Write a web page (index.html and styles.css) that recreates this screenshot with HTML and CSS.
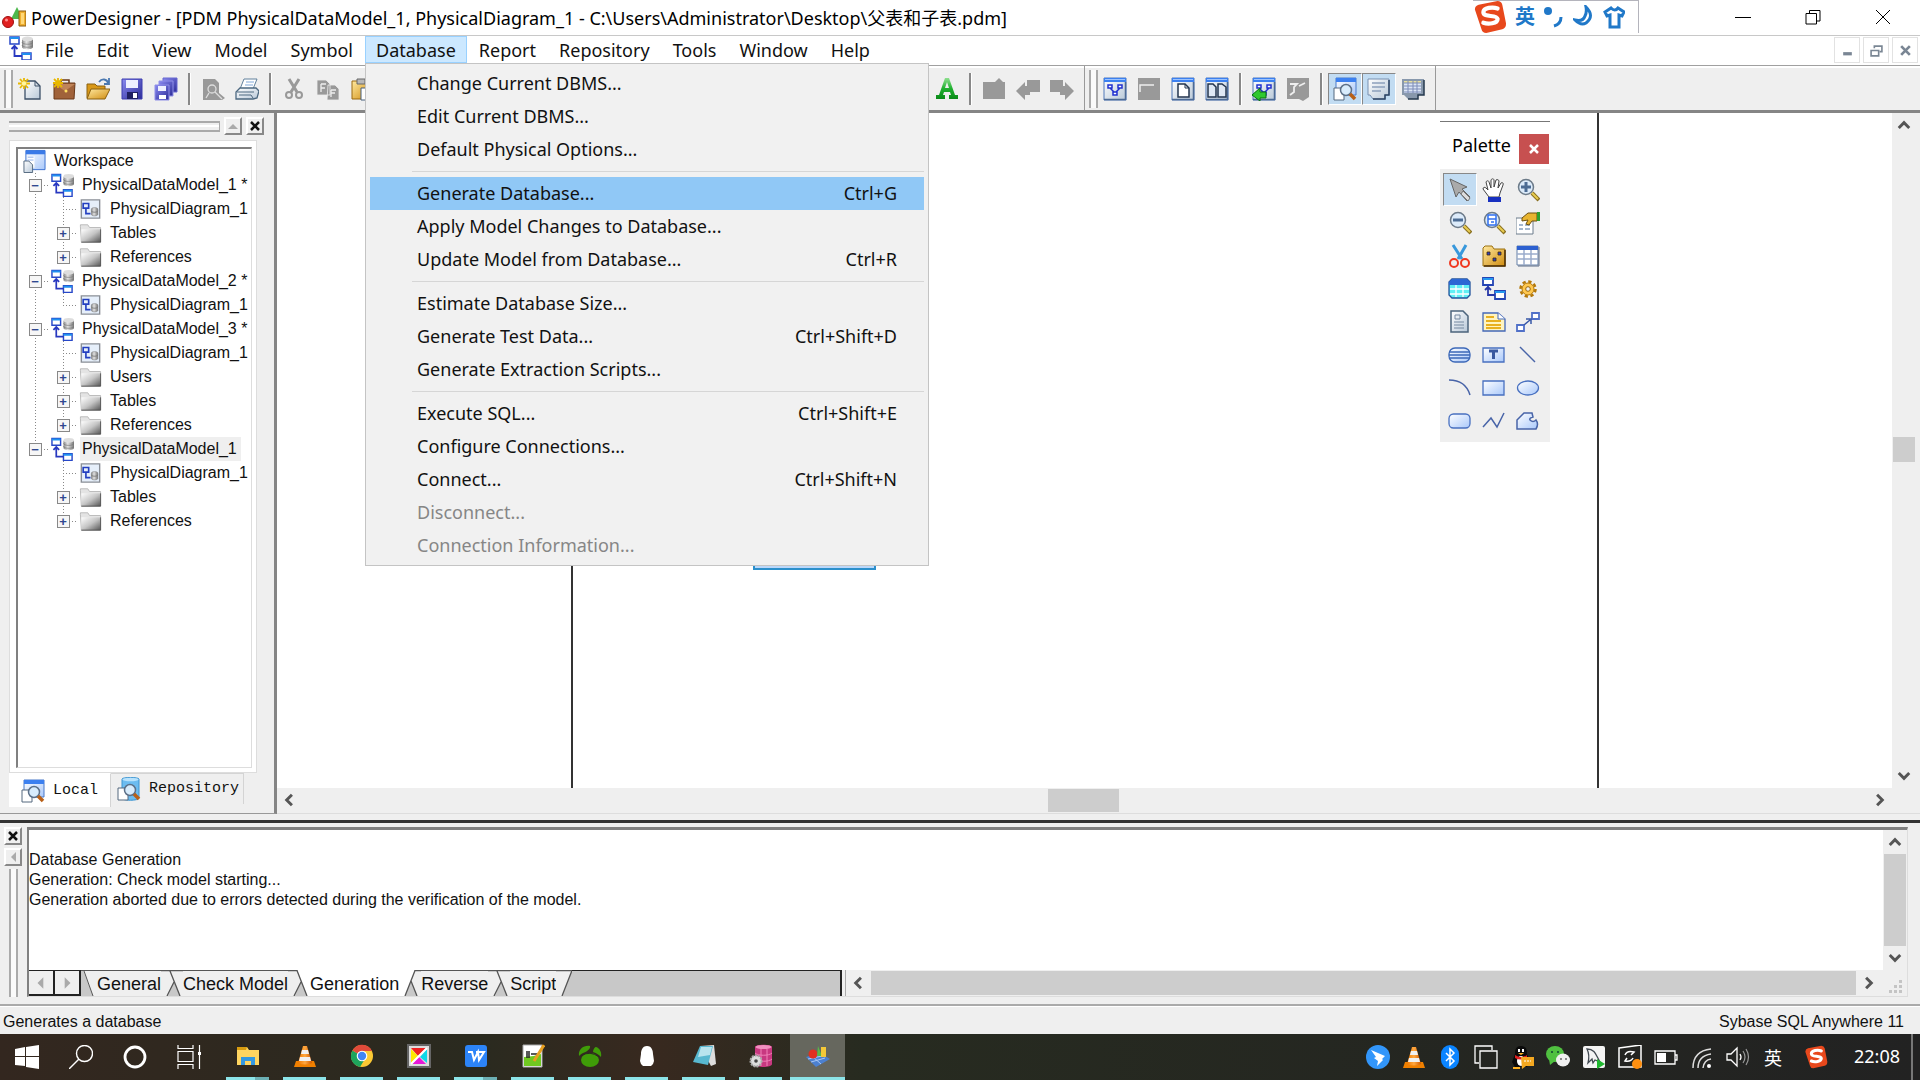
FILE: index.html
```html
<!DOCTYPE html>
<html lang="en">
<head>
  <meta charset="UTF-8">
  <meta name="viewport" content="width=device-width, initial-scale=1.0">
  <title>PowerDesigner</title>
  <link rel="stylesheet" href="styles.css">
</head>
<body>
  <!-- shared icons -->
  <svg class="defs" aria-hidden="true">
    <defs>
      <linearGradient id="gGray" x1="0" y1="0" x2="1" y2="1"><stop offset="0" stop-color="#fff"/><stop offset=".5" stop-color="#c4c4c4"/><stop offset="1" stop-color="#555"/></linearGradient>
      <linearGradient id="gBlue" x1="0" y1="0" x2="1" y2="1"><stop offset="0" stop-color="#fff"/><stop offset="1" stop-color="#a9c8fa"/></linearGradient>
      <linearGradient id="gPage" x1="0" y1="0" x2="1" y2="1"><stop offset="0" stop-color="#fff"/><stop offset="1" stop-color="#b8c8d8"/></linearGradient>
      <linearGradient id="gGold" x1="0" y1="0" x2="1" y2="1"><stop offset="0" stop-color="#ffe9a0"/><stop offset="1" stop-color="#d08c10"/></linearGradient>
      <linearGradient id="gDisk" x1="0" y1="0" x2="1" y2="1"><stop offset="0" stop-color="#8a8af0"/><stop offset="1" stop-color="#2c2c98"/></linearGradient>
      <linearGradient id="gDb" x1="0" y1="0" x2="1" y2="0"><stop offset="0" stop-color="#888"/><stop offset=".4" stop-color="#e2e2e2"/><stop offset="1" stop-color="#777"/></linearGradient>
      <linearGradient id="gCone" x1="0" y1="0" x2="1" y2="0"><stop offset="0" stop-color="#f07800"/><stop offset=".5" stop-color="#ffa840"/><stop offset="1" stop-color="#d05800"/></linearGradient>
      <linearGradient id="gGreen" x1="0" y1="0" x2="0" y2="1"><stop offset="0" stop-color="#8fe08f"/><stop offset=".5" stop-color="#20b030"/><stop offset="1" stop-color="#0a8a18"/></linearGradient>
    </defs>

    <symbol id="i-app" viewBox="0 0 24 24"><path d="M15 2l6 12H9z" fill="#4cb84c"/><path d="M17 6h7v15h-7z" fill="#f0b030" stroke="#8a5a10"/><path d="M19 8h3v11h-3z" fill="#ffd878"/><circle cx="6" cy="17" r="5.500" fill="#e02020" stroke="#a01010"/><circle cx="4.500" cy="15" r="1.500" fill="#ff9090"/></symbol>
    <symbol id="i-model" viewBox="0 0 24 24"><ellipse cx="18.500" cy="3" rx="5.500" ry="2.500" fill="#ddd"/><path d="M13 3v8c0 3 11 3 11 0V3c0 3-11 3-11 0z" fill="url(#gDb)"/><path d="M13 6c0 3 11 3 11 0M13 9c0 3 11 3 11 0" fill="none" stroke="#777" stroke-width=".7"/><path d="M1 1h9v7H1zM13 17h9v7h-9z" fill="#fff" stroke="#2848c8" stroke-width="1.500"/><path d="M1 1h9v2H1zM13 17h9v2h-9z" fill="#2090f0"/><path d="M5.500 9v11H13M2.500 13l3-3 3 3" fill="none" stroke="#2838c0" stroke-width="1.800"/></symbol>
    <symbol id="i-diagram" viewBox="0 0 24 24"><path d="M2 2h20v20H2z" fill="#e6effa" stroke="#8a8f96" stroke-width="1.500"/><path d="M4 6h6v5H4zM7 11v6h5" fill="none" stroke="#2440c0" stroke-width="1.800"/><path d="M13 12c0-2 7-2 7 0v6c0 2-7 2-7 0z" fill="url(#gDb)" stroke="#777" stroke-width=".6"/><path d="M13 14c0 2 7 2 7 0" fill="none" stroke="#777"/></symbol>
    <symbol id="i-folder" viewBox="0 0 24 24"><path d="M1 5V3h8l2 3h12v16H2z" fill="#e4e4e4" stroke="#aaa" stroke-width=".8"/><path d="M2 8h21v14H2z" fill="url(#gGray)"/><path d="M23 8v14H2" fill="none" stroke="#555"/></symbol>
    <symbol id="i-workspace" viewBox="0 0 24 24"><path d="M3 1h20v20H3z" fill="url(#gBlue)" stroke="#3a70d0"/><path d="M3 1h20v4H3z" fill="#3a7ae8"/><path d="M5 7h7v12H5z" fill="#fff"/><path d="M5 8h6M5 11h6" stroke="#90b0e8"/><path d="M1 12h5l4 4v8H1z" fill="url(#gPage)" stroke="#54687e"/></symbol>

    <symbol id="i-new" viewBox="0 0 24 24"><path d="M7 4h10l5 5v13H7z" fill="url(#gPage)" stroke="#3c5068" stroke-width="1.300"/><path d="M17 4v5h5" fill="none" stroke="#3c5068"/><path d="M6 1v11M0 6.500h12M2 2l8 9M10 2l-8 9" stroke="#e8b800" stroke-width="1.800"/><circle cx="6" cy="6.500" r="2.200" fill="#fff6a0"/></symbol>
    <symbol id="i-case" viewBox="0 0 24 24"><path d="M9 6V3h8v3" fill="none" stroke="#6a3818" stroke-width="1.500"/><path d="M2 6h21l-1 16H2z" fill="#a0623a" stroke="#6a3818"/><path d="M2 7h21l-10 7z" fill="#c08458"/><circle cx="14" cy="14" r="1.500" fill="#ffe060"/><path d="M6 1v10M1 6h10M2 2l8 8M10 2l-8 8" stroke="#e8b800" stroke-width="1.800"/></symbol>
    <symbol id="i-open" viewBox="0 0 24 24"><path d="M1 7h8l2 2h8v12H1z" fill="#d89818" stroke="#8a6010"/><path d="M5 12h19l-5 10H1z" fill="url(#gGold)" stroke="#8a6010"/><path d="M13 5c3-4 8-3 9 1M23 1v6h-5" fill="none" stroke="#4a78b0" stroke-width="1.800"/></symbol>
    <symbol id="i-save" viewBox="0 0 24 24"><path d="M2 2h20v20H2z" fill="url(#gDisk)" stroke="#3c3cb0"/><path d="M6 3h12v8H6z" fill="#eef0ff"/><path d="M7 15h11v7H7z" fill="#202060"/><path d="M13 16h4v5h-4z" fill="#fff"/></symbol>
    <symbol id="i-saveall" viewBox="0 0 24 24"><path d="M9 1h14v14H9z" fill="url(#gDisk)" stroke="#6868d0"/><path d="M5 4h14v15H5z" fill="url(#gDisk)" stroke="#9090e8"/><path d="M1 8h14v15H1z" fill="url(#gDisk)" stroke="#9090e8"/><path d="M4 9h8v5H4z" fill="#eef0ff"/><path d="M5 18h7v4H5z" fill="#fff"/></symbol>
    <symbol id="i-preview" viewBox="0 0 24 24"><path d="M2 2h12l4 4v10l6 5-3 2H2z" fill="#999"/><circle cx="11" cy="12" r="4" fill="#999" stroke="#ddd" stroke-width="1.300"/><path d="M5 21l3-5M14 15l7 7" fill="none" stroke="#ddd" stroke-width="1.300"/></symbol>
    <symbol id="i-print" viewBox="0 0 24 24"><path d="M9 2h13l-4 10H5z" fill="#fff" stroke="#60809c"/><path d="M11 5h8M10 8h8" stroke="#80a8d8"/><path d="M5 11h16l3 3-2 7-4 1H1v-7z" fill="url(#gPage)" stroke="#4c6880" stroke-width="1.300"/><path d="M2 15h17M4 18h12l2 3" stroke="#4c6880" fill="none"/></symbol>
    <symbol id="i-cut" viewBox="0 0 24 24"><path d="M7 2l8 13M17 2L9 15" stroke="#999" stroke-width="3"/><circle cx="7" cy="18" r="3" fill="none" stroke="#999" stroke-width="2"/><circle cx="17" cy="18" r="3" fill="none" stroke="#999" stroke-width="2"/></symbol>
    <symbol id="i-copy" viewBox="0 0 24 24"><path d="M1 3h9l4 4v11H1zM12 8h7l4 4v11H11z" fill="#999" stroke="#eee" stroke-width=".8"/><path d="M5 7h5M5 7v8M5 11h4M15 13h5M15 13v7M15 16h4" stroke="#eee" stroke-width="1.300"/></symbol>
    <symbol id="i-paste" viewBox="0 0 24 24"><path d="M2 4h18v18H2z" fill="url(#gGold)" stroke="#9a6810"/><path d="M7 2h8v5H7z" fill="#b8b8b8" stroke="#666"/><path d="M11 11h12v12H11z" fill="#fff" stroke="#48607c"/></symbol>
    <symbol id="i-font" viewBox="0 0 24 24"><path d="M10 1h4l6 17h3v4H14v-4h2l-1-3H9l-1 3h2v4H1v-4h3zM10 11h4l-2-6z" fill="url(#gGreen)" fill-rule="evenodd"/></symbol>
    <symbol id="i-up" viewBox="0 0 24 24"><path d="M1 5h12l4-4 4 4h2v17H1z" fill="#999"/></symbol>
    <symbol id="i-prev" viewBox="0 0 24 24"><path d="M0 14l9-9v4h2V3h13v12H14v3H9v5z" fill="#999"/></symbol>
    <symbol id="i-next" viewBox="0 0 24 24"><path d="M24 14l-9-9v4h-2V3H0v12h10v3h5v5z" fill="#999"/></symbol>
    <symbol id="i-window" viewBox="0 0 24 24"><path d="M1 1h22v22H1z" fill="url(#gPage)" stroke="#5078b8"/><path d="M1 1h22v4H1z" fill="#3c80f0"/><path d="M2 2.500h20" stroke="#9cc4ff"/><path d="M22.500 5v17.500H1" fill="none" stroke="#4c6a94" stroke-width="1.500"/></symbol>
    <symbol id="i-wdiagram" viewBox="0 0 24 24"><use href="#i-window"/><path d="M5 8h4v3H5zM15 8h4v3h-4zM10 15h4v3h-4zM7 11l4 4M17 11l-4 4" fill="#fff" stroke="#2030d0" stroke-width="1.500"/></symbol>
    <symbol id="i-wgray" viewBox="0 0 24 24"><path d="M1 1h22v22H1z" fill="#999"/><path d="M3 15V8h14" fill="none" stroke="#eee" stroke-width="1.500"/></symbol>
    <symbol id="i-wpage" viewBox="0 0 24 24"><use href="#i-window"/><path d="M7 7h7l4 4v9H7z" fill="#fff" stroke="#23344e" stroke-width="1.500"/><path d="M14 7v4h4" fill="none" stroke="#23344e"/></symbol>
    <symbol id="i-wpages" viewBox="0 0 24 24"><use href="#i-window"/><path d="M3 7h5l3 3v10H3zM13 7h4l4 3v10h-8z" fill="#dfe8f4" stroke="#23344e" stroke-width="1.500"/></symbol>
    <symbol id="i-wback" viewBox="0 0 24 24"><use href="#i-wdiagram"/><path d="M0 18l8-7v4h6v6H8v3z" fill="#30c830" stroke="#087010"/></symbol>
    <symbol id="i-wgray2" viewBox="0 0 24 24"><path d="M1 1h22v19l-6 4-4-2H1z" fill="#999"/><path d="M4 7h7l-3 3v5l-4 3M13 9l6-3" fill="none" stroke="#eee" stroke-width="1.800"/></symbol>
    <symbol id="i-browse" viewBox="0 0 24 24"><path d="M3 1h20v17H3z" fill="url(#gBlue)" stroke="#4878c8"/><path d="M3 1h20v4H3z" fill="#3c80f0"/><path d="M1 11h7l3 3v9H1z" fill="#fff" stroke="#54687e"/><circle cx="13" cy="13" r="5.500" fill="#d8ecfc" stroke="#5c7088" stroke-width="1.500"/><path d="M17 17l5 5" stroke="#b86018" stroke-width="3.500"/></symbol>
    <symbol id="i-browserepo" viewBox="0 0 24 24"><path d="M5 2c0-2 17-2 17 0v19c0 3-17 3-17 0z" fill="#6cbcf0" stroke="#3c94d0"/><ellipse cx="13.500" cy="2.500" rx="8" ry="1.800" fill="#b8e2fc"/><path d="M1 11h7l3 3v9H1z" fill="#fff" stroke="#54687e"/><circle cx="13" cy="13" r="5.500" fill="#d8ecfc" stroke="#5c7088" stroke-width="1.500"/><path d="M17 17l5 5" stroke="#b86018" stroke-width="3.500"/></symbol>
    <symbol id="i-output" viewBox="0 0 24 24"><path d="M1 2h21v16h-4v4H6l-3-4H1z" fill="url(#gPage)" stroke="#7890b0"/><path d="M5 6h13M5 10h13M5 14h9" stroke="#8ca0bc" stroke-width="1.300"/><path d="M22 3v15h-4v4H6" fill="none" stroke="#2c4464" stroke-width="1.500"/></symbol>
    <symbol id="i-result" viewBox="0 0 24 24"><path d="M1 2h22v16h-6v4H7l-4-4H1z" fill="#8898ac"/><path d="M3 4h17v12H3z" fill="#dce6f6"/><path d="M3 4h17v2H3z" fill="#e8e0a0"/><path d="M3 6h17M3 9h17M3 12h17M3 15h17M7 4v12M12 4v12M16 4v12" stroke="#7c8cb8" fill="none"/><path d="M23 3v15h-6v4H7" fill="none" stroke="#24384e" stroke-width="1.500"/></symbol>

    <symbol id="p-arrow" viewBox="0 0 24 24"><path d="M2 1l17 8-5 2 8 8-3 4-8-9-3 5z" fill="#aaa" stroke="#666" stroke-width="1"/><path d="M15 13l7 7-2 3-7-7z" fill="#ddd" stroke="#777"/></symbol>
    <symbol id="p-hand" viewBox="0 0 24 24"><path d="M7 19L1 11c0-2 2-2 3-1l2 2L4 4c1-2 3-1 3 0l2 6V2c1-2 3-1 3 0v7l2-7c1-1 3 0 3 1l-1 7 3-5c1-1 3 0 2 2l-3 8-1 4z" fill="#fff" stroke="#444" stroke-width="1"/><path d="M6 19h13v5H6z" fill="#1830c0"/></symbol>
    <symbol id="p-lens" viewBox="0 0 24 24"><circle cx="10" cy="9" r="7.500" fill="#dcebfa" stroke="#6c7a88" stroke-width="1.500"/><path d="M16 15l7 7" stroke="#8a7020" stroke-width="4"/><path d="M16 15l6 6" stroke="#e8cc50" stroke-width="2"/></symbol>
    <symbol id="p-zoomin" viewBox="0 0 24 24"><use href="#p-lens"/><path d="M10 4v10M5 9h10" stroke="#4c6c94" stroke-width="3"/></symbol>
    <symbol id="p-zoomout" viewBox="0 0 24 24"><use href="#p-lens"/><path d="M5 9h10" stroke="#4c6c94" stroke-width="3"/></symbol>
    <symbol id="p-zoomfit" viewBox="0 0 24 24"><use href="#p-lens"/><path d="M6 4h8v10H6zM6 8h8M9 11h3" fill="#fff" stroke="#3070f0" stroke-width="1.500"/></symbol>
    <symbol id="p-props" viewBox="0 0 24 24"><path d="M0 7h17v16H0z" fill="#fff" stroke="#6c7c8c"/><path d="M3 14h4M3 18h4M9 14h5M9 18h5" stroke="#88a0c0" stroke-width="1.500"/><path d="M6 7l6-5h9v8h-5l-3 4-3-1 2-4-6 1z" fill="#e8b430" stroke="#6c5010"/><path d="M21 1h3v9h-3z" fill="#30a030"/></symbol>
    <symbol id="p-cut" viewBox="0 0 24 24"><path d="M5 1l9 14M18 1l-8 14" stroke="#3898dc" stroke-width="3"/><circle cx="6" cy="19" r="4" fill="none" stroke="#f03820" stroke-width="2"/><circle cx="17" cy="19" r="4" fill="none" stroke="#f03820" stroke-width="2"/></symbol>
    <symbol id="p-package" viewBox="0 0 24 24"><path d="M1 22V4l2-2h7l2 3h11v17z" fill="url(#gGold)" stroke="#9a7010"/><path d="M5 8h3v3H5zM16 8h3v3h-3zM11 14h3v3h-3z" fill="#3040c0" stroke="#402808" stroke-width=".8"/><path d="M23 6v16H2" fill="none" stroke="#4a2c04" stroke-width="1.500"/></symbol>
    <symbol id="p-table" viewBox="0 0 24 24"><path d="M1 2h21v19H1z" fill="#fff" stroke="#6480a8"/><path d="M1 2h21v4H1z" fill="#2c60d0"/><path d="M1 10h21M1 15h21M8 6v15M15 6v15" stroke="#9aaccc" stroke-width="1.500"/><path d="M23 3v19H2" fill="none" stroke="#5c6c88"/></symbol>
    <symbol id="p-view" viewBox="0 0 24 24"><path d="M4 2h15l3 3v13l-3 3H4l-3-3V5z" fill="#60f0f4" stroke="#24549c" stroke-width="1.300"/><path d="M4 2h15l3 3v3H1V5z" fill="#2c68d4"/><path d="M2 12h19M2 17h19M8 8v12M15 8v12" stroke="#fff" stroke-width="1.300"/></symbol>
    <symbol id="p-ref" viewBox="0 0 24 24"><path d="M1 1h10v7H1zM13 14h10v8H13z" fill="#fff" stroke="#2444b4" stroke-width="1.800"/><path d="M1 1h10v2H1zM13 14h10v2H13z" fill="#2498f0"/><path d="M6 9v9h7M3 13l3-3 3 3" fill="none" stroke="#2838a8" stroke-width="1.800"/></symbol>
    <symbol id="p-gear" viewBox="0 0 24 24"><circle cx="12" cy="12" r="7.500" fill="none" stroke="#b47808" stroke-width="2.500" stroke-dasharray="3.300 2.590"/><circle cx="12" cy="12" r="6" fill="#ffc850" stroke="#b47808"/><circle cx="12" cy="12" r="2.300" fill="#efefef" stroke="#9c6808"/></symbol>
    <symbol id="p-file" viewBox="0 0 24 24"><path d="M3 1h12l5 5v16H3z" fill="url(#gPage)" stroke="#4c647c" stroke-width="1.500"/><path d="M7 5h5v4H7zM6 12h10M6 15h10M6 18h10" fill="none" stroke="#7488a0"/></symbol>
    <symbol id="p-note" viewBox="0 0 24 24"><path d="M1 3h15l7 6v12H1z" fill="#fff4c0" stroke="#4468b8" stroke-width="1.300"/><path d="M4 7h8M4 11h15M4 15h15M4 18h15" stroke="#e8b020" stroke-width="1.800"/><path d="M16 3v6h7" fill="#fff" stroke="#4468b8"/></symbol>
    <symbol id="p-link" viewBox="0 0 24 24"><path d="M1 15h7v6H1zM16 3h7v6h-7z" fill="#fff" stroke="#5070c8" stroke-width="1.800"/><path d="M8 15l6-5M10 9h5v5" fill="none" stroke="#3858a8" stroke-width="1.500"/></symbol>
    <symbol id="p-title" viewBox="0 0 24 24"><rect x="1" y="5" width="21" height="14" rx="6" fill="url(#gBlue)" stroke="#3c68b8" stroke-width="1.300"/><path d="M1 9h21M1 12h21M2 15h19" stroke="#3c68b8" stroke-width="1.300"/></symbol>
    <symbol id="p-text" viewBox="0 0 24 24"><path d="M1 5h21v14H1z" fill="url(#gBlue)" stroke="#4870c0" stroke-width="1.300"/><path d="M7 8h9M11.500 8v8" stroke="#3858a0" stroke-width="3"/></symbol>
    <symbol id="p-line" viewBox="0 0 24 24"><path d="M4 4l15 15" stroke="#4864a8" stroke-width="1.500"/></symbol>
    <symbol id="p-arc" viewBox="0 0 24 24"><path d="M1 4c10 0 18 5 21 15" fill="none" stroke="#4864a8" stroke-width="1.500"/></symbol>
    <symbol id="p-rect" viewBox="0 0 24 24"><path d="M1 5h21v14H1z" fill="url(#gBlue)" stroke="#4870c0" stroke-width="1.300"/></symbol>
    <symbol id="p-ellipse" viewBox="0 0 24 24"><ellipse cx="12" cy="12" rx="10.500" ry="7" fill="url(#gBlue)" stroke="#4870c0" stroke-width="1.300"/></symbol>
    <symbol id="p-round" viewBox="0 0 24 24"><rect x="1" y="5" width="21" height="14" rx="4.500" fill="url(#gBlue)" stroke="#4870c0" stroke-width="1.300"/></symbol>
    <symbol id="p-poly" viewBox="0 0 24 24"><path d="M1 18l8-9 6 9 7-14" fill="none" stroke="#4864a8" stroke-width="1.500"/></symbol>
    <symbol id="p-shape" viewBox="0 0 24 24"><path d="M1 11l7-7h8l1 4q-4 1-3 3 3 3 6 0 3 4 0 9H1z" fill="url(#gBlue)" stroke="#4864a8" stroke-width="1.500"/></symbol>

    <symbol id="a-left" viewBox="0 0 12 12"><path d="M8.500 1.500L4 6l4.500 4.500" fill="none" stroke="#555" stroke-width="2.500"/></symbol>
    <symbol id="a-right" viewBox="0 0 12 12"><path d="M3.500 1.500L8 6l-4.500 4.500" fill="none" stroke="#555" stroke-width="2.500"/></symbol>
    <symbol id="a-up" viewBox="0 0 12 12"><path d="M1.500 8.500L6 4l4.500 4.500" fill="none" stroke="#555" stroke-width="2.500"/></symbol>
    <symbol id="a-down" viewBox="0 0 12 12"><path d="M1.500 3.500L6 8l4.500-4.500" fill="none" stroke="#555" stroke-width="2.500"/></symbol>
    <symbol id="a-x" viewBox="0 0 12 12"><path d="M2 2l8 8M10 2l-8 8" stroke="currentColor" stroke-width="2.500"/></symbol>

    <symbol id="s-sogou" viewBox="0 0 36 36"><path d="M6 5l20-4q4 0 5 4l4 20q0 5-4 6l-17 4q-4 0-5-4L2 10q0-4 4-5z" fill="#e8481c"/><path d="M26 9c-5-2-15-1-15 4 0 6 14 2 15 7 0 5-10 6-15 4" fill="none" stroke="#fff" stroke-width="4.500" stroke-linecap="round"/></symbol>
    <symbol id="t-cone" viewBox="0 0 24 24"><path d="M3 17h18l2 6H1z" fill="#f08000"/><path d="M10 2h4l5 17q-7 3-14 0z" fill="url(#gCone)"/><path d="M9 6l6 0 1 4-8 0zM7 13h10l1 4H6z" fill="#f0f0f0"/></symbol>
  </svg>

  <header class="titlebar">
    <svg class="icon"><use href="#i-app"/></svg>
    <h1>PowerDesigner - [PDM PhysicalDataModel_1, PhysicalDiagram_1 - C:\Users\Administrator\Desktop\父表和子表.pdm]</h1>
    <div class="ime">
      <svg class="ime-logo"><use href="#s-sogou"/></svg>
      <span>英</span>
      <svg viewBox="0 0 22 24"><circle cx="5" cy="6" r="4"/><path class="ln" d="M18 12q0 7-7 9"/></svg>
      <svg viewBox="0 0 22 24"><path class="ln" d="M13 2q9 9 0 16-5 3-11-3 8 2 10-4 2-4 1-9z"/></svg>
      <svg viewBox="0 0 22 24"><path class="ln" d="M8 3L2 7l2 4 3-1v12h9V10l3 1 2-4-6-4q-3 4-7 0z"/></svg>
    </div>
    <div class="winbtns">
      <button aria-label="Minimize"><svg viewBox="0 0 16 16"><path d="M0 8.500h16"/></svg></button>
      <button aria-label="Restore"><svg viewBox="0 0 16 16"><path d="M1 4.500h10.500V15H1zM4.500 4V1.500H15V12h-3"/></svg></button>
      <button aria-label="Close"><svg viewBox="0 0 16 16"><path d="M1 1l14 14M15 1L1 15"/></svg></button>
    </div>
  </header>

  <nav class="menubar">
    <svg class="icon"><use href="#i-model"/></svg>
    <button>File</button>
    <button>Edit</button>
    <button>View</button>
    <button>Model</button>
    <button>Symbol</button>
    <div class="menu-open">
      <button class="active">Database</button>
      <div class="dropdown">
        <button>Change Current DBMS...</button>
        <button>Edit Current DBMS...</button>
        <button>Default Physical Options...</button>
        <hr>
        <button class="hover">Generate Database...<kbd>Ctrl+G</kbd></button>
        <button>Apply Model Changes to Database...</button>
        <button>Update Model from Database...<kbd>Ctrl+R</kbd></button>
        <hr>
        <button>Estimate Database Size...</button>
        <button>Generate Test Data...<kbd>Ctrl+Shift+D</kbd></button>
        <button>Generate Extraction Scripts...</button>
        <hr>
        <button>Execute SQL...<kbd>Ctrl+Shift+E</kbd></button>
        <button>Configure Connections...</button>
        <button>Connect...<kbd>Ctrl+Shift+N</kbd></button>
        <button disabled>Disconnect...</button>
        <button disabled>Connection Information...</button>
      </div>
    </div>
    <button>Report</button>
    <button>Repository</button>
    <button>Tools</button>
    <button>Window</button>
    <button>Help</button>
    <div class="mdi">
      <button aria-label="Minimize diagram"><svg viewBox="0 0 12 12"><path d="M2 9h8" stroke="#7a8694" stroke-width="3"/></svg></button>
      <button aria-label="Restore diagram"><svg viewBox="0 0 12 12"><path d="M1 6h7v5H1zM4 4V2h7v5H9" fill="none" stroke="#7a8694" stroke-width="1.500"/></svg></button>
      <button aria-label="Close diagram"><svg><use href="#a-x"/></svg></button>
    </div>
  </nav>

  <div class="toolbars">
    <div class="toolbar standard">
      <i class="grip"></i>
      <button aria-label="New"><svg><use href="#i-new"/></svg></button>
      <button aria-label="New project"><svg><use href="#i-case"/></svg></button>
      <button aria-label="Open"><svg><use href="#i-open"/></svg></button>
      <button aria-label="Save"><svg><use href="#i-save"/></svg></button>
      <button aria-label="Save all"><svg><use href="#i-saveall"/></svg></button>
      <i class="sep"></i>
      <button aria-label="Print preview"><svg><use href="#i-preview"/></svg></button>
      <button aria-label="Print"><svg><use href="#i-print"/></svg></button>
      <i class="sep"></i>
      <button aria-label="Cut"><svg><use href="#i-cut"/></svg></button>
      <button aria-label="Copy"><svg><use href="#i-copy"/></svg></button>
      <button aria-label="Paste"><svg><use href="#i-paste"/></svg></button>
      <button class="push" aria-label="Font"><svg><use href="#i-font"/></svg></button>
      <i class="sep"></i>
      <button aria-label="Up one level"><svg><use href="#i-up"/></svg></button>
      <button aria-label="Previous"><svg><use href="#i-prev"/></svg></button>
      <button aria-label="Next"><svg><use href="#i-next"/></svg></button>
    </div>
    <div class="toolbar">
      <i class="grip"></i>
      <button aria-label="Diagram"><svg><use href="#i-wdiagram"/></svg></button>
      <button aria-label="Parent diagram"><svg><use href="#i-wgray"/></svg></button>
      <button aria-label="Page"><svg><use href="#i-wpage"/></svg></button>
      <button aria-label="All pages"><svg><use href="#i-wpages"/></svg></button>
      <i class="sep"></i>
      <button aria-label="Previous view"><svg><use href="#i-wback"/></svg></button>
      <button aria-label="Next view"><svg><use href="#i-wgray2"/></svg></button>
      <i class="sep"></i>
      <button class="pressed" aria-label="Browser"><svg><use href="#i-browse"/></svg></button>
      <button class="pressed" aria-label="Output"><svg><use href="#i-output"/></svg></button>
      <button aria-label="Result list"><svg><use href="#i-result"/></svg></button>
    </div>
  </div>

  <main class="main">
    <aside class="browser">
      <div class="panel-head">
        <i class="hgrip"></i>
        <button class="mini" aria-label="Collapse"><svg viewBox="0 0 12 12"><path d="M1 9l5-5 5 5z" fill="#aaa"/></svg></button>
        <button class="mini" aria-label="Close browser"><svg><use href="#a-x"/></svg></button>
      </div>
      <div class="tree-frame">
        <div class="tree">
          <div class="row"><svg><use href="#i-workspace"/></svg><span>Workspace</span></div>
          <div class="row"><i class="c v h"><b>−</b></i><svg><use href="#i-model"/></svg><span>PhysicalDataModel_1 *</span></div>
          <div class="row"><i class="c v"></i><i class="c v h"></i><svg><use href="#i-diagram"/></svg><span>PhysicalDiagram_1</span></div>
          <div class="row"><i class="c v"></i><i class="c v h"><b>+</b></i><svg><use href="#i-folder"/></svg><span>Tables</span></div>
          <div class="row"><i class="c v"></i><i class="c end h"><b>+</b></i><svg><use href="#i-folder"/></svg><span>References</span></div>
          <div class="row"><i class="c v h"><b>−</b></i><svg><use href="#i-model"/></svg><span>PhysicalDataModel_2 *</span></div>
          <div class="row"><i class="c v"></i><i class="c end h"></i><svg><use href="#i-diagram"/></svg><span>PhysicalDiagram_1</span></div>
          <div class="row"><i class="c v h"><b>−</b></i><svg><use href="#i-model"/></svg><span>PhysicalDataModel_3 *</span></div>
          <div class="row"><i class="c v"></i><i class="c v h"></i><svg><use href="#i-diagram"/></svg><span>PhysicalDiagram_1</span></div>
          <div class="row"><i class="c v"></i><i class="c v h"><b>+</b></i><svg><use href="#i-folder"/></svg><span>Users</span></div>
          <div class="row"><i class="c v"></i><i class="c v h"><b>+</b></i><svg><use href="#i-folder"/></svg><span>Tables</span></div>
          <div class="row"><i class="c v"></i><i class="c end h"><b>+</b></i><svg><use href="#i-folder"/></svg><span>References</span></div>
          <div class="row"><i class="c end h"><b>−</b></i><svg><use href="#i-model"/></svg><span class="current">PhysicalDataModel_1</span></div>
          <div class="row"><i class="c"></i><i class="c v h"></i><svg><use href="#i-diagram"/></svg><span>PhysicalDiagram_1</span></div>
          <div class="row"><i class="c"></i><i class="c v h"><b>+</b></i><svg><use href="#i-folder"/></svg><span>Tables</span></div>
          <div class="row"><i class="c"></i><i class="c end h"><b>+</b></i><svg><use href="#i-folder"/></svg><span>References</span></div>
        </div>
      </div>
      <div class="browser-tabs">
        <button class="on"><svg><use href="#i-browse"/></svg>Local</button>
        <button><svg><use href="#i-browserepo"/></svg>Repository</button>
      </div>
    </aside>

    <section class="workarea">
      <div class="canvas">
        <div class="sheet"></div>
        <div class="entity"></div>
        <div class="palette">
          <div class="palette-head">Palette <button aria-label="Close palette"><svg><use href="#a-x"/></svg></button></div>
          <div class="palette-grid">
            <button class="pressed" aria-label="Pointer"><svg><use href="#p-arrow"/></svg></button>
            <button aria-label="Grabber"><svg><use href="#p-hand"/></svg></button>
            <button aria-label="Zoom in"><svg><use href="#p-zoomin"/></svg></button>
            <button aria-label="Zoom out"><svg><use href="#p-zoomout"/></svg></button>
            <button aria-label="Open diagram"><svg><use href="#p-zoomfit"/></svg></button>
            <button aria-label="Properties"><svg><use href="#p-props"/></svg></button>
            <button aria-label="Delete"><svg><use href="#p-cut"/></svg></button>
            <button aria-label="Package"><svg><use href="#p-package"/></svg></button>
            <button aria-label="Table"><svg><use href="#p-table"/></svg></button>
            <button aria-label="View"><svg><use href="#p-view"/></svg></button>
            <button aria-label="Reference"><svg><use href="#p-ref"/></svg></button>
            <button aria-label="Procedure"><svg><use href="#p-gear"/></svg></button>
            <button aria-label="File"><svg><use href="#p-file"/></svg></button>
            <button aria-label="Note"><svg><use href="#p-note"/></svg></button>
            <button aria-label="Link"><svg><use href="#p-link"/></svg></button>
            <button aria-label="Title"><svg><use href="#p-title"/></svg></button>
            <button aria-label="Text"><svg><use href="#p-text"/></svg></button>
            <button aria-label="Line"><svg><use href="#p-line"/></svg></button>
            <button aria-label="Arc"><svg><use href="#p-arc"/></svg></button>
            <button aria-label="Rectangle"><svg><use href="#p-rect"/></svg></button>
            <button aria-label="Ellipse"><svg><use href="#p-ellipse"/></svg></button>
            <button aria-label="Rounded rectangle"><svg><use href="#p-round"/></svg></button>
            <button aria-label="Polyline"><svg><use href="#p-poly"/></svg></button>
            <button aria-label="Polygon"><svg><use href="#p-shape"/></svg></button>
          </div>
        </div>
      </div>
      <div class="vscroll">
        <button aria-label="Scroll up"><svg><use href="#a-up"/></svg></button>
        <div class="track"><i class="thumb"></i></div>
        <button aria-label="Scroll down"><svg><use href="#a-down"/></svg></button>
      </div>
      <div class="hscroll">
        <button aria-label="Scroll left"><svg><use href="#a-left"/></svg></button>
        <div class="track"><i class="thumb"></i></div>
        <button aria-label="Scroll right"><svg><use href="#a-right"/></svg></button>
      </div>
    </section>
  </main>

  <section class="output">
    <div class="output-side">
      <button class="mini" aria-label="Close output"><svg><use href="#a-x"/></svg></button>
      <button class="mini" aria-label="Collapse output"><svg viewBox="0 0 12 12"><path d="M9 1L4 6l5 5z" fill="#aaa"/></svg></button>
      <i class="vgrip"></i>
    </div>
    <div class="output-box">
      <div class="output-body">
        <div class="log">
          <p>Database Generation</p>
          <p>Generation: Check model starting...</p>
          <p>Generation aborted due to errors detected during the verification of the model.</p>
        </div>
        <div class="vscroll">
          <button aria-label="Scroll log up"><svg><use href="#a-up"/></svg></button>
          <div class="track full"><i class="thumb"></i></div>
          <button aria-label="Scroll log down"><svg><use href="#a-down"/></svg></button>
        </div>
      </div>
      <div class="output-foot">
        <div class="tabs">
          <button class="step" aria-label="Previous tab"><svg viewBox="0 0 12 12"><path d="M8 1L3 6l5 5z" fill="#aaa"/></svg></button>
          <button class="step" aria-label="Next tab"><svg viewBox="0 0 12 12"><path d="M4 1l5 5-5 5z" fill="#aaa"/></svg></button>
          <svg class="first" viewBox="0 0 16 26"><path d="M2 0h14v26h-4z" fill="#efefef"/><path d="M0 .5h16M3 1l9 25" fill="none" stroke="#555"/></svg>
          <button class="tab">General</button>
          <svg viewBox="0 0 22 26"><path d="M0 0h22v26h-3l-6-14-6 14H0z" fill="#efefef"/><path d="M0 .5h22M9 1l10 25M6 26l7-14" fill="none" stroke="#555" stroke-width="1.300"/></svg>
          <button class="tab">Check Model</button>
          <svg viewBox="0 0 22 26"><path d="M0 0h9l4 12-6 14H0z" fill="#efefef"/><path d="M9 0h13v26h-3z" fill="#fff"/><path d="M0 .5h9l10 25.500M6 26l7-14" fill="none" stroke="#555" stroke-width="1.300"/></svg>
          <button class="tab on">Generation</button>
          <svg viewBox="0 0 22 26"><path d="M0 0h16L6 26H0z" fill="#fff"/><path d="M16 0h6v26h-4l-6-14z" fill="#efefef"/><path d="M22 .5h-6L6 26M12 11l6 15" fill="none" stroke="#555" stroke-width="1.300"/></svg>
          <button class="tab">Reverse</button>
          <svg viewBox="0 0 22 26"><path d="M0 0h22v26h-3l-6-14-6 14H0z" fill="#efefef"/><path d="M0 .5h22M9 1l10 25M6 26l7-14" fill="none" stroke="#555" stroke-width="1.300"/></svg>
          <button class="tab">Script</button>
          <svg class="first" viewBox="0 0 16 26"><path d="M0 0h16L6 26H0z" fill="#efefef"/><path d="M0 .5h16L6 26" fill="none" stroke="#555" stroke-width="1.300"/></svg>
        </div>
        <div class="hscroll">
          <button aria-label="Scroll log left"><svg><use href="#a-left"/></svg></button>
          <div class="track full"><i class="thumb"></i></div>
          <button aria-label="Scroll log right"><svg><use href="#a-right"/></svg></button>
          <svg class="sizer" viewBox="0 0 14 14"><path d="M10 1h3v3h-3zM5 6h3v3H5zM10 6h3v3h-3zM0 11h3v3H0zM5 11h3v3H5zM10 11h3v3h-3z" fill="#c4c4c4"/></svg>
        </div>
      </div>
    </div>
  </section>

  <div class="statusbar"><span>Generates a database</span><span>Sybase SQL Anywhere 11</span></div>

  <footer class="taskbar">
    <div class="sys">
      <button aria-label="Start"><svg viewBox="0 0 24 24"><path d="M0 4l10-2v9H0zM11 2l13-2v11H11zM0 12h10v9L0 20zM11 12h13v12l-13-2z" fill="#fff"/></svg></button>
      <button aria-label="Search"><svg viewBox="0 0 24 24"><circle cx="15.500" cy="8.500" r="8" fill="none" stroke="#fff" stroke-width="1.400"/><path d="M10 14L0 24" stroke="#fff" stroke-width="1.400"/></svg></button>
      <button aria-label="Cortana"><svg viewBox="0 0 24 24"><circle cx="12" cy="12" r="10" fill="none" stroke="#fff" stroke-width="2.800"/></svg></button>
      <button aria-label="Task view"><svg viewBox="0 0 24 24"><path d="M1 0v3.500h15V0M1 6.500h15v10H1zM1 24v-4.500h15V24M22.500 0v24" fill="none" stroke="#fff" stroke-width="1.200"/><path d="M21 7h3v3h-3z" fill="#fff"/></svg></button>
    </div>
    <div class="apps">
      <button class="many" aria-label="Explorer"><svg viewBox="0 0 24 24"><path d="M1 3h10l2 3h10v15H1z" fill="#ffd560"/><path d="M1 3h10l-1 3H1z" fill="#d89c10"/><path d="M5 21v-8h14v8h-4v-4H9v4z" fill="#3498e0"/></svg></button>
      <button aria-label="VLC"><svg><use href="#t-cone"/></svg></button>
      <button aria-label="Chrome"><svg viewBox="0 0 24 24"><circle cx="12" cy="12" r="11" fill="#fcc934"/><path d="M12 12L2.500 6.500A11 11 0 0 0 10 23l5.500-9z" fill="#1ea45c"/><path d="M12 12L2.500 6.500A11 11 0 0 1 22 7H12z" fill="#e04a3a"/><circle cx="12" cy="12" r="5.300" fill="#fff"/><circle cx="12" cy="12" r="4.200" fill="#4285f4"/></svg></button>
      <button aria-label="Image viewer"><svg viewBox="0 0 24 24"><path d="M1 1h22v22H1z" fill="#ddd" stroke="#666" stroke-width="2"/><path d="M4 4h15l-8 8z" fill="#f02020"/><path d="M4 5v14l7-7z" fill="#ffe800"/><path d="M20 5v14l-7-6z" fill="#10d8e8"/><path d="M5 20h14l-7-7z" fill="#e818d8"/><path d="M4 20L20 4" stroke="#fff" stroke-width="2"/></svg></button>
      <button class="many" aria-label="WPS"><svg viewBox="0 0 24 24"><rect x="1" y="1" width="22" height="22" rx="3" fill="#2c84f8"/><path d="M4 8h4l2 8 4-8 1 8 5-8h-8" fill="none" stroke="#fff" stroke-width="2"/></svg></button>
      <button aria-label="Editor"><svg viewBox="0 0 24 24"><path d="M2 1h19v22H2z" fill="#fff" stroke="#aaa"/><path d="M3 13q9 0 17-3v12H3z" fill="#70c820"/><path d="M6 7v7M8 7v7M10 10h6" stroke="#222" stroke-width="1.500"/><path d="M23 1L13 17" stroke="#e8a020" stroke-width="3"/></svg></button>
      <button aria-label="Navicat"><svg viewBox="0 0 24 24" fill="#3f9c08"><ellipse cx="12" cy="16" rx="9" ry="7"/><path d="M1 12C0 5 6 1 12 2c1 3-4 6-7 7-2 1-3 2-4 3zM15 8c0-3 2-5 3-5 4 1 6 6 5 10-2-2-4-4-8-5z"/><path d="M3 12q9-6 18 1" fill="none" stroke="#2a2a1f"/></svg></button>
      <button aria-label="QQ"><svg viewBox="0 0 24 24"><path d="M12 2c5 0 6 5 6 8l1 7-1 3-2 2H8l-2-2-1-3 1-7c0-3 1-8 6-8z" fill="#fff"/></svg></button>
      <button aria-label="Notebook"><svg viewBox="0 0 24 24"><path d="M8 2l14-1 2 19-5 2z" fill="#ddd"/><path d="M8 2h13l-5 19L1 18z" fill="#58b8d0"/><path d="M9 3h11l-2 8-12 2z" fill="#b8e4ee"/></svg></button>
      <button aria-label="Database tool"><svg viewBox="0 0 24 24"><path d="M6 3c0-3 17-3 17 0v17c0 4-17 4-17 0z" fill="#c83880"/><ellipse cx="14.500" cy="3" rx="8" ry="2" fill="#f090c0"/><path d="M6 9c3 3 14 3 17 0M6 15c3 3 14 3 17 0M12 5v17M18 5v17" fill="none" stroke="#f080b8"/><circle cx="7" cy="17" r="5.500" fill="#ddd" stroke="#aaa" stroke-width="2" stroke-dasharray="2 1"/><circle cx="7" cy="17" r="1.800" fill="#444"/></svg></button>
      <button class="current" aria-label="PowerDesigner"><svg viewBox="0 0 24 24"><path d="M0 13l14-4 10 6-14 8z" fill="#4c80d0"/><path d="M2 15l14-3M5 18l14-4M6 12l9 8" stroke="#a8c8f4"/><circle cx="7" cy="10" r="4.500" fill="#e03020"/><path d="M12 2l4 10h-5z" fill="#58b848"/><path d="M15 3h5v10h-5z" fill="#f4c838"/></svg></button>
    </div>
    <div class="tray">
      <span class="ti"><svg viewBox="0 0 24 24"><circle cx="12" cy="12" r="12" fill="#3296fa"/><path d="M5 5l14 6-3 3 1 1-6 6 1-5-4-3 2-1z" fill="#fff"/></svg></span>
      <span class="ti"><svg><use href="#t-cone"/></svg></span>
      <span class="ti"><svg viewBox="0 0 24 24"><rect x="3" width="18" height="24" rx="9" fill="#0a84ff"/><path d="M8 8l8 8-4 4V4l4 4-8 8" fill="none" stroke="#fff" stroke-width="1.500"/></svg></span>
      <span class="ti"><svg viewBox="0 0 24 24"><path d="M5 18H1V1h17v4M6 6h17v17H6z" fill="none" stroke="#fff" stroke-width="1.300"/></svg></span>
      <span class="ti"><svg viewBox="0 0 24 24"><path d="M11 1c6 0 6 5 6 8l3 8-3 5H5l-3-5 3-8c0-3 0-8 6-8z" fill="#0a0a0a"/><ellipse cx="11" cy="16" rx="4" ry="5" fill="#fff"/><path d="M8 4h2v3H8zM12 4h2v3h-2z" fill="#fff"/><path d="M5 10q6 4 12 0v3q-7 3-12 0z" fill="#e02020"/><path d="M8 8h6l-3 2zM3 22h7v2H3z" fill="#ffb020"/><path d="M11 12h13v9h-8l-4 3z" fill="#f4a820"/><path d="M14 16h7" stroke="#fff" stroke-dasharray="2 1"/></svg></span>
      <span class="ti"><svg viewBox="0 0 24 24"><ellipse cx="9" cy="9" rx="9" ry="8" fill="#50c040"/><path d="M3 14l1 6 5-4z" fill="#50c040"/><ellipse cx="17" cy="15" rx="7" ry="6.500" fill="#f0f0f0"/><circle cx="6" cy="7" r="1" fill="#143"/><circle cx="12" cy="7" r="1" fill="#143"/><circle cx="15" cy="14" r="1" fill="#666"/><circle cx="20" cy="14" r="1" fill="#666"/></svg></span>
      <span class="ti"><svg viewBox="0 0 24 24"><rect x="1" y="1" width="22" height="22" rx="2" fill="#f4f4f4"/><path d="M5 4c8 0 9 6 13 13l-5-2-2 3-1-4-4 4q2-8-1-14z" fill="none" stroke="#404850" stroke-width="1.300"/><path d="M15 14l8 5-8 5z" fill="#20b830"/></svg></span>
      <span class="ti"><svg viewBox="0 0 24 24"><path d="M1 3l22-3v22H1z" fill="none" stroke="#fff" stroke-width="1.500"/><path d="M7 10q2-5 9-3l-3 3M15 13q-2 4-8 3l2-3" fill="none" stroke="#fff" stroke-width="1.500"/><circle cx="19" cy="19" r="5" fill="#ff9010"/></svg></span>
      <span class="ti"><svg viewBox="0 0 24 24"><path d="M1 6h20v13H1zM21 10h2v5h-2" fill="none" stroke="#fff" stroke-width="1.300"/><path d="M3 8h9v9H3z" fill="#fff"/></svg></span>
      <span class="ti"><svg viewBox="0 0 24 24"><path d="M3 23Q3 6 21 4M8 23Q8 11 21 9M13 23Q14 15 21 14" fill="none" stroke="#ddd" stroke-width="1.500"/><circle cx="19" cy="21" r="2" fill="#fff"/></svg></span>
      <span class="ti"><svg viewBox="0 0 24 24"><path d="M1 9h4l6-6v18l-6-6H1zM14 9q2 3 0 6" fill="none" stroke="#fff" stroke-width="1.300"/><path d="M17 6q4 6 0 12M20 4q5 8 0 16" fill="none" stroke="#999" stroke-width="1.200"/></svg></span>
      <span class="lang">英</span>
      <span class="ti"><svg><use href="#s-sogou"/></svg></span>
      <time>22:08</time>
    </div>
  </footer>
</body>
</html>
```

FILE: styles.css
```css
* { box-sizing: border-box; }

body {
  margin: 0;
  height: 100vh;
  overflow: hidden;
  display: flex;
  flex-direction: column;
  background: #efefef;
  color: #111;
  font-family: "Noto Sans", "Noto Sans CJK SC", sans-serif;
  font-size: 18px;
}

button {
  font: inherit;
  color: inherit;
  background: none;
  border: 0;
  padding: 0;
}

button, .icon, .tray span { flex: none; }
svg { display: block; flex: none; width: 24px; height: 24px; }
.defs { position: absolute; width: 0; height: 0; }

/* title bar */
.titlebar {
  display: flex;
  align-items: center;
  height: 36px;
  background: #fff;
  border-bottom: 1px solid #c8c8c8;
  padding: 0 2px 2px;
}
.titlebar h1 {
  margin: 0 auto 0 5px;
  font-size: 18px;
  font-weight: normal;
  color: #000;
  white-space: nowrap;
}
.ime {
  display: flex;
  align-items: center;
  gap: 8px;
  width: 166px;
  height: 33px;
  border: solid #b4b4bc;
  border-width: 1px 1px 0 0;
  color: #2078c8;
  font-weight: bold;
}
.ime span { font-size: 20px; line-height: 24px; }
.ime svg { width: 22px; fill: #2078c8; }
.ime .ime-logo { width: 34px; height: 34px; }
.ime .ln { fill: none; stroke: #2078c8; stroke-width: 3; }
.winbtns { display: flex; margin-left: 69px; }
.winbtns button { width: 70px; display: grid; place-items: center; }
.winbtns svg { width: 16px; height: 16px; fill: none; stroke: #000; }

/* menu bar */
.menubar {
  display: flex;
  gap: 1px;
  height: 29px;
  background: #fff;
  padding-left: 9px;
}
.menubar > button, .menu-open > button {
  height: 27px;
  padding: 0 11px;
  line-height: 24px;
}
.menu-open { position: relative; }
.menu-open > .active {
  background: #cce8ff;
  box-shadow: inset 0 0 0 1px #99d1ff;
}
.dropdown {
  position: absolute;
  z-index: 5;
  top: 27px;
  left: 0;
  width: 564px;
  padding: 3px 4px;
  background: #f1f1f1;
  border: 1px solid #c4c4c4;
}
.dropdown button {
  display: flex;
  justify-content: space-between;
  align-items: center;
  width: 100%;
  height: 33px;
  padding: 0 27px 2px 47px;
}
.dropdown button:disabled { color: #868686; }
.dropdown .hover { background: #90c8f6; }
.dropdown hr {
  margin: 5px 0 5px 42px;
  border: 0;
  border-top: 1px solid #d6d6d6;
}
.dropdown kbd { font-family: inherit; }
.mdi { display: flex; gap: 3px; margin-left: auto; padding: 1px 2px; }
.mdi button {
  width: 26px;
  height: 26px;
  display: grid;
  place-items: center;
  border: 1px solid #e2e2e2;
  color: #7a8694;
}
.mdi svg { width: 13px; height: 13px; }

/* toolbars */
.toolbars {
  display: flex;
  height: 48px;
  border-top: 1px solid #a0a0a0;
  border-bottom: 3px solid #858585;
  box-shadow: inset 0 2px #fff;
}
.toolbar {
  display: flex;
  align-items: center;
  padding: 2px 5px 0 4px;
  border-right: 1px solid #999;
}
.toolbar.standard { width: 1085px; }
.toolbar button {
  width: 34px;
  height: 32px;
  display: grid;
  place-items: center;
}
.toolbar .push { margin-left: auto; }
.pressed {
  background: #c2dcf2;
  border: 1px solid;
  border-color: #888 #fff #fff #888;
}
.grip {
  width: 9px;
  height: 38px;
  border: solid #aaa;
  border-width: 0 2px;
  background: #fafafa;
}
.sep {
  width: 13px;
  height: 32px;
  background: linear-gradient(90deg, #888 2px, #fff 2px) 5px 0 / 3px 100% no-repeat;
}

/* object browser */
.main { display: flex; flex: 1; min-height: 0; }
.browser {
  display: flex;
  flex-direction: column;
  width: 277px;
  padding: 0 17px 4px 9px;
  border-right: 3px solid #858585;
  border-bottom: 1px solid #999;
}
.panel-head { display: flex; gap: 4px; align-items: center; padding: 4px 0 5px; margin-right: -7px; }
.hgrip {
  flex: 1;
  height: 11px;
  border: solid #aaa;
  border-width: 2px 1px 2px 0;
  background: linear-gradient(#fff, #fff) 0 2px / 100% 2px no-repeat;
}
.mini {
  width: 18px;
  height: 18px;
  display: grid;
  place-items: center;
  border: 2px solid;
  border-color: #fff #888 #888 #fff;
}
.mini svg { width: 12px; height: 12px; }
.tree-frame {
  flex: 1;
  border: 1px solid #ddd;
  background: #fff;
  padding: 6px 4px 4px 6px;
}
.tree {
  height: 100%;
  border: solid;
  border-width: 2px 1px 1px 2px;
  border-color: #808080 #ddd #ddd #808080;
  padding-left: 3px;
  font: 16px/24px "Liberation Sans", sans-serif;
}
.row { display: flex; height: 24px; white-space: nowrap; }
.row svg { width: 23px; margin: 0 8px 0 2px; }
.row .c + .c + svg { height: 22px; margin: 1px 8px 0 2px; }
.row .current { background: #efefef; padding: 0 4px 0 2px; margin-left: -2px; }
.c {
  display: grid;
  place-items: center;
  width: 28px;
  height: 24px;
  background-repeat: no-repeat;
  --dv: repeating-linear-gradient(#888 0 1px, transparent 1px 3px);
  --dh: repeating-linear-gradient(90deg, #888 0 1px, transparent 1px 3px);
}
.c.v { background: var(--dv) 14px 0 / 1px 24px no-repeat; }
.c.v.h { background: var(--dv) 14px 0 / 1px 24px no-repeat, var(--dh) 14px 12px / 14px 1px no-repeat; }
.c.end.h { background: var(--dv) 14px 0 / 1px 12px no-repeat, var(--dh) 14px 12px / 14px 1px no-repeat; }
.c b {
  width: 13px;
  height: 13px;
  border: 1px solid #888;
  background: #f6f6f6;
  color: #304890;
  font: bold 13px/11px "Liberation Sans", sans-serif;
  text-align: center;
}
.browser-tabs {
  display: flex;
  align-items: flex-start;
  height: 36px;
  font: 15px/24px "Liberation Mono", monospace;
}
.browser-tabs button {
  display: flex;
  align-items: center;
  gap: 8px;
  height: 31px;
  padding: 0 4px 0 6px;
  border-right: 1px solid #d4d4d4;
  border-top: 1px solid #d4d4d4;
}
.browser-tabs .on {
  height: 34px;
  padding: 0 12px;
  background: #fff;
  border-top-color: #fff;
}

/* diagram */
.workarea {
  flex: 1;
  min-width: 0;
  display: grid;
  grid-template: 1fr 24px / 1fr 24px;
  padding: 0 4px 1px 0;
  border-bottom: 1px solid #ddd;
}
.canvas { position: relative; overflow: hidden; background: #fff; }
.sheet {
  position: absolute;
  top: 0;
  bottom: 0;
  left: 294px;
  width: 1028px;
  border: solid #333;
  border-width: 0 2px;
}
.entity {
  position: absolute;
  left: 476px;
  top: 400px;
  width: 123px;
  height: 57px;
  border: 2px solid #2c90cc;
  background: #bcd8fa;
}
.palette {
  position: absolute;
  left: 1163px;
  top: 8px;
  width: 110px;
  border-top: 1px solid #777;
}
.palette-head {
  display: flex;
  justify-content: space-between;
  height: 47px;
  padding: 0 1px 0 12px;
  line-height: 46px;
  color: #000;
}
.palette-head button {
  width: 30px;
  height: 30px;
  margin-top: 12px;
  display: grid;
  place-items: center;
  background: #c75050;
  color: #fff;
}
.palette-head svg { width: 12px; height: 12px; }
.palette-grid {
  display: grid;
  grid-template-columns: repeat(3, 34px);
  grid-auto-rows: 33px;
  padding: 4px 3px 5px;
  background: #efefef;
}
.palette-grid button { display: grid; place-items: center; }

/* scrollbars */
.vscroll, .hscroll { display: flex; background: #efefef; }
.vscroll { flex-direction: column; }
.hscroll { grid-column: 1 / -1; }
.vscroll button, .hscroll button { width: 24px; height: 24px; display: grid; place-items: center; }
.vscroll button svg, .hscroll button svg { width: 14px; height: 14px; }
.track { flex: 1; display: flex; }
.vscroll .track { flex-direction: column; }
.thumb { background: #cdcdcd; }
.vscroll .thumb { height: 25px; margin: 300px 1px 0; }
.hscroll .thumb { width: 71px; margin: 1px 0 0 747px; }
.main .hscroll { padding-right: 24px; }
.track.full .thumb { flex: 1; width: auto; height: auto; margin: 0 1px; }

/* output window */
.output {
  display: flex;
  height: 184px;
  margin-top: 6px;
  border-top: 3px solid #333;
  padding: 4px 12px 7px 2px;
}
.output-side { display: flex; flex-direction: column; gap: 3px; width: 25px; align-items: center; padding-right: 3px; }
.vgrip {
  flex: 1;
  width: 9px;
  border: solid #aaa;
  border-width: 0 2px;
  background: #fafafa;
}
.output-box {
  flex: 1;
  min-width: 0;
  display: flex;
  flex-direction: column;
  border: solid;
  border-width: 3px 1px 1px 2px;
  border-color: #808080 #ddd #ddd #808080;
}
.output-body { flex: 1; display: flex; background: #fff; min-height: 0; }
.log {
  flex: 1;
  padding-top: 20px;
  font: 16px/20px "Liberation Sans", sans-serif;
}
.log p { margin: 0; }
.output-foot { display: flex; height: 26px; }
.tabs {
  display: flex;
  flex: none;
  width: 813px;
  background: #c8c8c8;
  border: solid #222;
  border-width: 1px 2px 0 0;
  font: 18px/24px "Liberation Sans", sans-serif;
}
.tabs > svg { width: 22px; height: 26px; margin-top: -1px; }
.tabs > .first { width: 16px; }
.tab {
  margin-top: -1px;
  height: 26px;
  background: #efefef;
  border-top: 1px solid #555;
}
.tab.on { background: #fff; border-color: #fff; }
.step {
  width: 26px;
  display: grid;
  place-items: center;
  background: #efefef;
  border: solid #222;
  border-width: 0 2px 2px 0;
}
.step svg { width: 14px; height: 14px; }
.output-foot .hscroll { flex: 1; margin-left: 3px; border-left: 1px solid #aaa; align-items: center; }
.output-foot .track { height: 24px; }
.sizer { width: 14px; height: 14px; margin: 6px 4px 0 8px; }

.statusbar {
  display: flex;
  justify-content: space-between;
  height: 30px;
  padding: 2px 16px 0 3px;
  border-top: 2px solid #aaa;
  box-shadow: inset 0 1px #fff;
  font: 16px/28px "Liberation Sans", sans-serif;
}

/* taskbar */
.taskbar {
  display: flex;
  align-items: stretch;
  height: 46px;
  background: linear-gradient(90deg, #33271f, #2a2a1f 25%, #38291f 34%, #272b20 45%, #222 100%);
  color: #fff;
}
.sys, .apps, .tray { display: flex; align-items: center; }
.sys button { width: 54px; display: grid; place-items: center; }
.apps { gap: 14px; align-items: stretch; padding-left: 10px; }
.apps button {
  width: 43px;
  display: grid;
  place-items: center;
  border-bottom: 3px solid #8ce4e8;
}
.apps .many {
  background: linear-gradient(90deg, #8ce4e8 29px, #6cb0b4 29px) border-box bottom / 100% 3px no-repeat;
  border-color: transparent;
}
.apps .current { width: 55px; margin-left: -6px; background: #66675e; }
.tray { margin-left: auto; padding-right: 7px; }
.ti { width: 36px; display: grid; place-items: center; }
.lang { width: 34px; text-align: center; }
.lang + .ti { width: 52px; }
.tray time {
  align-self: stretch;
  padding: 0 11px 0 12px;
  line-height: 44px;
  border-right: 2px solid #777;
}
```
